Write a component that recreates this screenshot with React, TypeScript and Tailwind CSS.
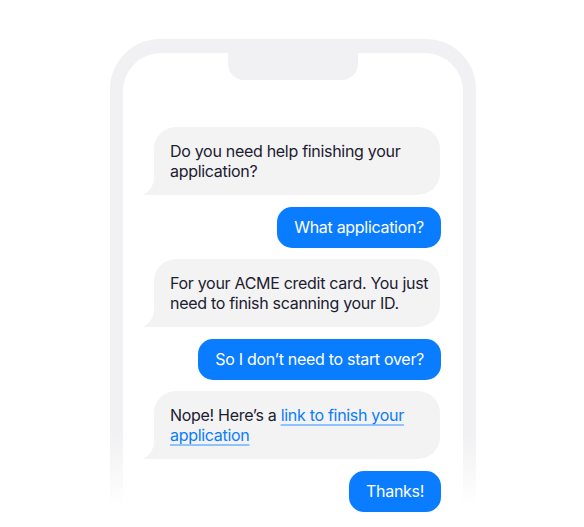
import React from "react";

function Tail() {
  return (
    <svg
      className="absolute bottom-0 left-[-11px]"
      width="12"
      height="18"
      viewBox="0 0 12 18"
    >
      <path d="M11 0 C11 8 7 14 0 18 L12 18 L12 0 Z" fill="#f3f3f4" />
    </svg>
  );
}

function Incoming({ children }: { children: React.ReactNode }) {
  return (
    <div className="relative w-[286px] self-start rounded-[22px] rounded-bl-none bg-[#f3f3f4] py-[14px] pl-4 pr-[8px] text-[16px] leading-[20px] tracking-[-0.3px] text-[#1b2030]">
      {children}
      <Tail />
    </div>
  );
}

function Outgoing({ children }: { children: React.ReactNode }) {
  return (
    <div className="self-end rounded-[15px] bg-[#0a7cff] px-[17px] py-[10px] text-[16px] leading-[21px] tracking-[-0.3px] text-white">
      {children}
    </div>
  );
}

export default function App() {
  return (
    <div
      className="h-[527px] w-[584px] overflow-hidden bg-white"
      style={{ fontFamily: "Inter, 'Noto Sans', sans-serif" }}
    >
      <div className="ml-[110px] mt-[39px] h-[520px] w-[366px] rounded-t-[50px] bg-linear-to-b from-[#f1f1f3] from-[76%] to-white to-[90%] px-[13px] pt-[14px]">
        <div className="relative h-full rounded-t-[38px] bg-white pl-[31px] pr-[22px] pt-[74px]">
          <div className="absolute left-1/2 top-0 h-[27px] w-[130px] -translate-x-1/2 rounded-b-[16px] bg-[#f1f1f3]" />
          <div className="flex flex-col gap-[11.5px]">
            <Incoming>Do you need help finishing your application?</Incoming>
            <Outgoing>What application?</Outgoing>
            <Incoming>
              For your ACME credit card. You just need to finish scanning your
              ID.
            </Incoming>
            <Outgoing>So I don’t need to start over?</Outgoing>
            <Incoming>
              Nope! Here’s a{" "}
              <a className="text-[#0a7cff] underline decoration-[#8ec3ff] decoration-2 underline-offset-[3px]">
                link to finish your application
              </a>
            </Incoming>
            <Outgoing>Thanks!</Outgoing>
          </div>
        </div>
      </div>
    </div>
  );
}
